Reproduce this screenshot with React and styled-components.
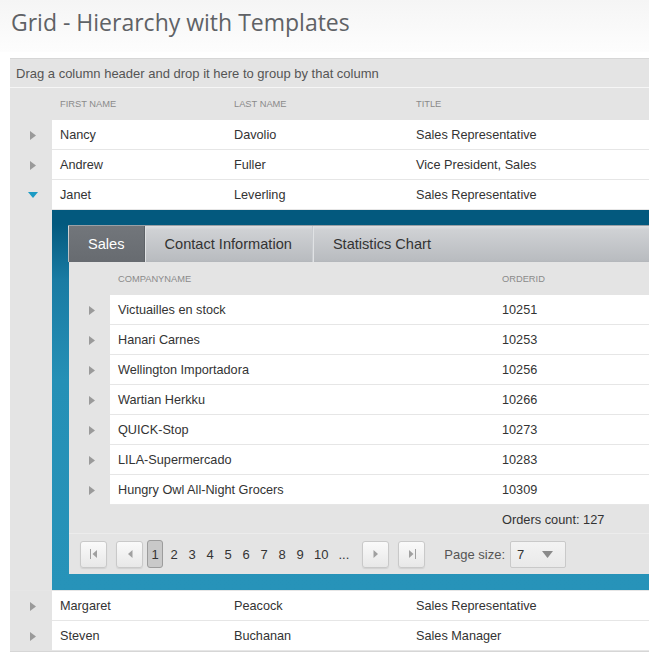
import React from 'react';
import styled, { createGlobalStyle } from 'styled-components';

const employees = [
  { first: 'Nancy', last: 'Davolio', title: 'Sales Representative' },
  { first: 'Andrew', last: 'Fuller', title: 'Vice President, Sales' },
  { first: 'Janet', last: 'Leverling', title: 'Sales Representative', expanded: true },
  { first: 'Margaret', last: 'Peacock', title: 'Sales Representative' },
  { first: 'Steven', last: 'Buchanan', title: 'Sales Manager' },
];

const orders = [
  { company: 'Victuailles en stock', id: 10251 },
  { company: 'Hanari Carnes', id: 10253 },
  { company: 'Wellington Importadora', id: 10256 },
  { company: 'Wartian Herkku', id: 10266 },
  { company: 'QUICK-Stop', id: 10273 },
  { company: 'LILA-Supermercado', id: 10283 },
  { company: 'Hungry Owl All-Night Grocers', id: 10309 },
];

const tabs = ['Sales', 'Contact Information', 'Statistics Chart'];
const pages = [1, 2, 3, 4, 5, 6, 7, 8, 9, 10];

const Arrow = ({ expanded }) => (
  expanded ? (
    <svg width="10" height="6" viewBox="0 0 10 6"><path d="M0 0h10L5 6z" fill="#1c9bc4" /></svg>
  ) : (
    <svg width="6" height="9" viewBox="0 0 6 9"><path d="M0 0l6 4.5L0 9z" fill="#9a9a9a" /></svg>
  )
);

const PagerIcon = ({ dir, bar }) => (
  <svg width="10" height="10" viewBox="0 0 10 10">
    {dir === 'left' ? (
      <>
        {bar && <rect x="1" y="0" width="1" height="10" fill="#a0a0a0" />}
        <path d={bar ? 'M8 1v8L3.5 5z' : 'M7.5 1v8L3 5z'} fill="#a0a0a0" />
      </>
    ) : (
      <>
        <path d={bar ? 'M2 1v8L6.5 5z' : 'M2.5 1v8L7 5z'} fill="#a0a0a0" />
        {bar && <rect x="8" y="0" width="1" height="10" fill="#a0a0a0" />}
      </>
    )}
  </svg>
);

const App = () => (
  <>
    <GlobalStyle />
    <Page>
      <Title>Grid - Hierarchy with Templates</Title>
      <Grid>
        <GroupPanel>Drag a column header and drop it here to group by that column</GroupPanel>
        <HeadRow>
          <HierCell />
          <HeadCell>First Name</HeadCell>
          <HeadCell>Last Name</HeadCell>
          <HeadCell>Title</HeadCell>
        </HeadRow>
        {employees.map((e) => (
          <React.Fragment key={e.first}>
            <Row>
              <HierCell><Arrow expanded={e.expanded} /></HierCell>
              <Cell>{e.first}</Cell>
              <Cell>{e.last}</Cell>
              <Cell>{e.title}</Cell>
            </Row>
            {e.expanded && (
              <DetailRow>
                <HierCell />
                <DetailCell>
                  <TabStrip>
                    {tabs.map((t, i) => (
                      <Tab key={t} $active={i === 0}>{t}</Tab>
                    ))}
                  </TabStrip>
                  <InnerGrid>
                    <InnerHead>
                      <InnerHier />
                      <HeadCell>CompanyName</HeadCell>
                      <HeadCell>OrderID</HeadCell>
                    </InnerHead>
                    {orders.map((o) => (
                      <InnerRow key={o.id}>
                        <InnerHier><Arrow /></InnerHier>
                        <Cell>{o.company}</Cell>
                        <Cell>{o.id}</Cell>
                      </InnerRow>
                    ))}
                    <FooterRow>
                      <InnerHier />
                      <span />
                      <FooterText>Orders count: 127</FooterText>
                    </FooterRow>
                    <Pager>
                      <PageButton $space={9}><PagerIcon dir="left" bar /></PageButton>
                      <PageButton $space={4}><PagerIcon dir="left" /></PageButton>
                      <Numbers>
                        {pages.map((p) => (
                          <PageNum key={p} $current={p === 1}>{p}</PageNum>
                        ))}
                        <PageNum>...</PageNum>
                      </Numbers>
                      <PageButton $space={9}><PagerIcon dir="right" /></PageButton>
                      <PageButton $space={19}><PagerIcon dir="right" bar /></PageButton>
                      <SizeLabel>Page size:</SizeLabel>
                      <Select>
                        <span>7</span>
                        <svg width="11" height="7" viewBox="0 0 11 7"><path d="M0 0h11L5.5 7z" fill="#8a8a8a" /></svg>
                      </Select>
                    </Pager>
                  </InnerGrid>
                </DetailCell>
              </DetailRow>
            )}
          </React.Fragment>
        ))}
      </Grid>
    </Page>
  </>
);

const GlobalStyle = createGlobalStyle`
  body {
    margin: 0;
    background: #fff;
    overflow: hidden;
    font-family: "Liberation Sans", Arial, sans-serif;
    color: #333;
  }
`;

const Page = styled.div`
  width: 649px;
  height: 652px;
  overflow: hidden;
`;

const Title = styled.h1`
  margin: 0;
  padding: 7px 0 0 11px;
  height: 52px;
  box-sizing: border-box;
  font-family: "Open Sans", sans-serif;
  font-weight: 400;
  font-size: 23px;
  line-height: 30px;
  color: #5f6266;
  background: linear-gradient(#f5f5f5, #fdfdfd);
`;

const Grid = styled.div`
  margin: 6px 0 0 10px;
  width: 760px;
  border-top: 1px solid #d6d6d6;
  border-bottom: 1px solid #d6d6d6;
  background: #e4e4e4;
`;

const GroupPanel = styled.div`
  height: 28px;
  padding-left: 6px;
  display: flex;
  align-items: center;
  font-size: 13px;
  color: #555;
  border-bottom: 1px solid #f6f6f6;
`;

const columns = '42px 174px 182px 1fr';

const HeadRow = styled.div`
  display: grid;
  grid-template-columns: ${columns};
  height: 32px;
`;

const HeadCell = styled.div`
  display: flex;
  align-items: center;
  padding-left: 8px;
  font-size: 9.3px;
  text-transform: uppercase;
  color: #8a8a8a;
`;

const Row = styled.div`
  display: grid;
  grid-template-columns: ${columns};
  height: 30px;
  & > *:not(:first-child) {
    background: #fff;
    border-bottom: 1px solid #e6e6e6;
  }
`;

const HierCell = styled.div`
  display: flex;
  align-items: center;
  justify-content: center;
  padding-left: 4px;
  background: #e4e4e4;
`;

const Cell = styled.div`
  display: flex;
  align-items: center;
  padding-left: 8px;
  font-size: 12.7px;
  color: #333;
  white-space: nowrap;
`;

const DetailRow = styled.div`
  display: grid;
  grid-template-columns: 42px 1fr;
  border-bottom: 1px solid #e6e6e6;
`;

const DetailCell = styled.div`
  padding: 15px 0 16px 16px;
  background: linear-gradient(#03597e 0, #03597e 14px, #1a7ba3 70px, #2590b6 170px, #2793b9 100%);
`;

const TabStrip = styled.div`
  display: flex;
  height: 37px;
  box-sizing: border-box;
  padding-left: 1px;
  background: linear-gradient(#dfe0e2 0, #cfd1d4 4px, #b9bcc0 34px, #b3b6ba 100%);
  border-top: 1px solid #9aa0a6;
`;

const Tab = styled.div`
  display: flex;
  align-items: center;
  padding: 0 ${(p) => (p.$active ? '19px' : '20px')};
  font-size: 14.6px;
  color: ${(p) => (p.$active ? '#fff' : '#333')};
  background: ${(p) => (p.$active ? 'linear-gradient(#72767b, #676b70)' : 'transparent')};
  border-right: 1px solid ${(p) => (p.$active ? '#5e6267' : '#c9ccd0')};
  box-shadow: ${(p) => (p.$active ? 'none' : 'inset 1px 0 0 #e0e2e4')};
  &:last-child {
    border-right: none;
  }
`;

const InnerGrid = styled.div`
  margin-left: 1px;
  background: #e4e4e4;
`;

const innerColumns = '41px 384px 1fr';

const InnerHead = styled.div`
  display: grid;
  grid-template-columns: ${innerColumns};
  height: 33px;
`;

const InnerHier = styled.div`
  display: flex;
  align-items: center;
  justify-content: center;
  padding-left: 4px;
  background: #e4e4e4;
`;

const InnerRow = styled.div`
  display: grid;
  grid-template-columns: ${innerColumns};
  height: 30px;
  & > *:not(:first-child) {
    background: #fff;
    border-bottom: 1px solid #e6e6e6;
  }
`;

const FooterRow = styled.div`
  display: grid;
  grid-template-columns: ${innerColumns};
  height: 28px;
`;

const FooterText = styled.div`
  display: flex;
  align-items: center;
  padding-left: 8px;
  font-size: 12.8px;
  color: #333;
`;

const Pager = styled.div`
  display: flex;
  align-items: center;
  height: 40px;
  padding-left: 11px;
  border-top: 1px solid #ececec;
  font-size: 13px;
  color: #333;
`;

const PageButton = styled.div`
  width: 27px;
  height: 27px;
  box-sizing: border-box;
  margin-right: ${(p) => p.$space}px;
  display: flex;
  align-items: center;
  justify-content: center;
  border: 1px solid #c9c9c9;
  border-radius: 3px;
  background: linear-gradient(#fafafa, #e8e8e8);
  box-shadow: 0 1px 1px rgba(0, 0, 0, 0.08);
`;

const Numbers = styled.div`
  display: flex;
  align-items: center;
  margin-right: 8px;
`;

const PageNum = styled.span`
  display: flex;
  align-items: center;
  justify-content: center;
  box-sizing: border-box;
  min-width: ${(p) => (p.$current ? '16px' : '18px')};
  height: 28px;
  padding: 0 ${(p) => (p.$current ? '0' : '4px')};
  margin-right: ${(p) => (p.$current ? '2px' : '0')};
  border: 1px solid ${(p) => (p.$current ? '#9c9c9c' : 'transparent')};
  border-radius: 3px;
  background: ${(p) => (p.$current ? '#c9c9c9' : 'transparent')};
  color: #333;
`;

const SizeLabel = styled.span`
  margin-right: 5px;
  color: #555;
`;

const Select = styled.div`
  width: 56px;
  height: 27px;
  box-sizing: border-box;
  padding: 0 12px 0 6px;
  display: flex;
  align-items: center;
  justify-content: space-between;
  border: 1px solid #c9c9c9;
  border-radius: 2px;
  background: linear-gradient(#f3f3f3, #e9e9e9);
  color: #333;
`;

export default App;
